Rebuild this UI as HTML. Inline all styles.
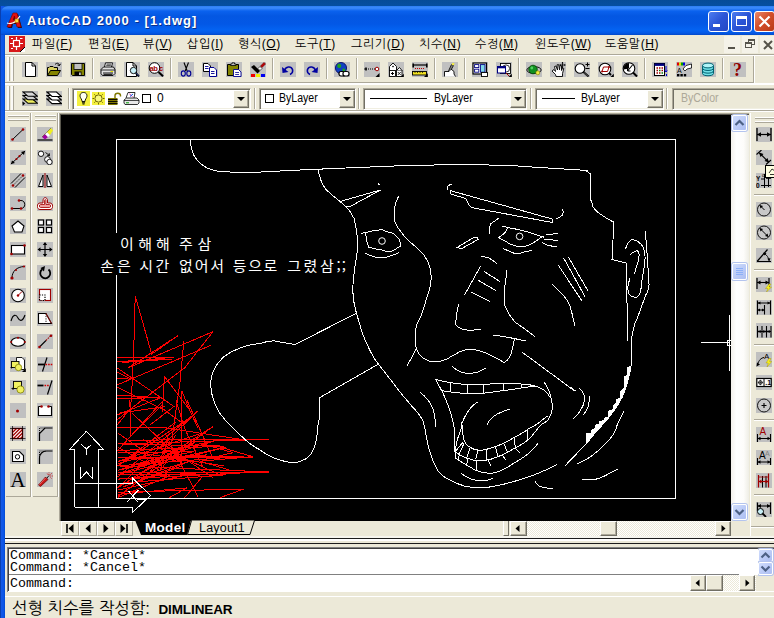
<!DOCTYPE html>
<html lang="ko"><head><meta charset="utf-8"><title>AutoCAD 2000 - [1.dwg]</title>
<style>
html,body{margin:0;padding:0}
body{width:774px;height:618px;overflow:hidden;position:relative;background:#ece9d8;font-family:"Liberation Sans","NanumGothic","Noto Sans CJK KR",sans-serif;font-size:12px;color:#000}
.abs{position:absolute}
#desk{left:0;top:0;width:774px;height:7px;background:linear-gradient(#064c98,#0550a2)}
#lborder{left:0;top:6px;width:5px;height:612px;background:linear-gradient(90deg,#0a3fb0 0,#0a3fb0 1px,#1559e6 1px,#0855e8 4px,#0347c8 5px)}
#title{left:1px;top:6px;width:773px;height:29px;border-radius:7px 0 0 0;background:linear-gradient(#2b7df3 0,#3c8cfb 2px,#0b62ee 5px,#0457e2 10px,#0358e6 18px,#0463f2 24px,#0459e6 27px,#0348c8 29px)}
#title .txt{left:26px;top:7px;color:#fff;font-weight:bold;font-size:13px;letter-spacing:1.05px;white-space:nowrap;text-shadow:1px 1px 0 #0a2f8c}
.cap{top:5px;width:21px;height:21px;border-radius:3px;border:1px solid #fff;box-sizing:border-box;background:linear-gradient(135deg,#4d7df0,#2a54d6 50%,#2348c4)}
#menubar{left:5px;top:35px;width:769px;height:19px;background:#ece9d8}
.mi{top:2px;font-size:12px;white-space:nowrap;letter-spacing:0.6px}
.mi u{text-decoration:underline}
.tbicon{width:16px;height:15px;background:#c0c0c0;overflow:hidden}
.sep{width:0;height:20px;border-left:1px solid #aca899;border-right:1px solid #fff}
.hsep{height:0;width:20px;border-top:1px solid #aca899;border-bottom:1px solid #fff}
.combo{height:22px;box-sizing:border-box;background:#fff;border:1px solid;border-color:#aca899 #fff #fff #aca899;box-shadow:inset 1px 1px 0 #716f64,inset -1px -1px 0 #f1efe2}
.dd{width:16px;height:18px;box-sizing:border-box;background:#ece9d8;border:1px solid;border-color:#fff #716f64 #716f64 #fff;box-shadow:inset -1px -1px 0 #aca899;margin:1px 0 0 0}
.dd:after{content:"";position:absolute;left:3px;top:6px;border:4px solid transparent;border-top:4px solid #000;border-bottom:0}
.mono{font-family:"Liberation Mono",monospace;font-size:13.33px;line-height:13px;white-space:pre}
.sbtn{width:16px;height:16px;box-sizing:border-box;background:#ece9d8;border:1px solid;border-color:#fff #716f64 #716f64 #fff;box-shadow:inset -1px -1px 0 #aca899}
.vsb{width:15px;height:16px;box-sizing:border-box;border:1px solid #fff;border-radius:2px;background:linear-gradient(135deg,#cfdcfc,#b9c9f6 60%,#adbff2);box-shadow:0 0 0 1px #b4c4ee;overflow:hidden}
.vsb svg{position:absolute;left:-1px;top:-1px}
.nav{width:18px;height:15px;box-sizing:border-box;background:#ece9d8;border:1px solid;border-color:#fff #aca899 #aca899 #fff;overflow:hidden}
.nav svg{position:absolute;left:-1px;top:-1px}
.hatch{background-color:#fff;background-image:linear-gradient(45deg,#ece9d8 25%,transparent 25%,transparent 75%,#ece9d8 75%),linear-gradient(45deg,#ece9d8 25%,transparent 25%,transparent 75%,#ece9d8 75%);background-size:2px 2px;background-position:0 0,1px 1px}

</style></head>
<body>
<div id="desk" class="abs"></div>
<div id="lborder" class="abs"></div>
<div id="title" class="abs">
  <svg class="abs" style="left:5px;top:6px" width="18" height="18" viewBox="0 0 18 18">
    <path d="M8 2 L12 2 L16 16 L12 16 L11 12 L7 12 L6 16 L2 16 Z" fill="#30080a"/><path d="M7 1 L11 1 L15 15 L11 15 L10 11 L6 11 L5 15 L1 15 Z M7.2 8 L9.2 8 L8.4 4 Z" fill="#e01010" stroke="#700" stroke-width="0.6"/>
    <path d="M1 11 C4 12,8 11,10 9 L14 4" fill="none" stroke="#fff" stroke-width="1.2"/>
    <rect x="9" y="7" width="3.4" height="3.4" fill="#ffe040" stroke="#a07000" stroke-width="0.6"/>
  </svg>
  <div class="abs txt">AutoCAD 2000 - [1.dwg]</div>
  <div class="abs cap" style="left:707px"><div class="abs" style="left:4px;top:12px;width:7px;height:3px;background:#fff"></div></div>
  <div class="abs cap" style="left:730px"><div class="abs" style="left:4px;top:4px;width:11px;height:10px;box-sizing:border-box;border:1px solid #fff;border-top:3px solid #fff"></div></div>
  <div class="abs cap" style="left:753px;background:linear-gradient(135deg,#e8886a,#d4502c 45%,#b83a18)">
    <svg class="abs" style="left:3px;top:3px" width="13" height="13" viewBox="0 0 13 13"><path d="M1.5 1.5 L11.5 11.5 M11.5 1.5 L1.5 11.5" stroke="#fff" stroke-width="2.2"/></svg>
  </div>
</div>
<div id="menubar" class="abs">
  <svg class="abs" style="left:4px;top:1px" width="16" height="16" viewBox="0 0 16 16">
    <rect x="0" y="0" width="16" height="16" fill="#d81818"/>
    <path d="M11 16 L16 11 L16 16 Z" fill="#fff"/><path d="M11 16 L16 11" stroke="#000" stroke-width="1"/>
    <rect x="4.5" y="4.5" width="6" height="6" fill="none" stroke="#fff" stroke-width="1.2"/>
    <path d="M7.5 1 V4 M7.5 11 V14 M1 7.5 H4 M11 7.5 H14 M2 2.5 H4 M11 2.5 H13.5 M2 12.5 H4" stroke="#fff" stroke-width="1.2"/>
  </svg>
  <div class="abs mi" style="left:27px">파일(<u>F</u>)</div>
  <div class="abs mi" style="left:83px">편집(<u>E</u>)</div>
  <div class="abs mi" style="left:138px">뷰(<u>V</u>)</div>
  <div class="abs mi" style="left:182px">삽입(<u>I</u>)</div>
  <div class="abs mi" style="left:233px">형식(<u>O</u>)</div>
  <div class="abs mi" style="left:290px">도구(<u>T</u>)</div>
  <div class="abs mi" style="left:346px">그리기(<u>D</u>)</div>
  <div class="abs mi" style="left:414px">치수(<u>N</u>)</div>
  <div class="abs mi" style="left:470px">수정(<u>M</u>)</div>
  <div class="abs mi" style="left:530px">윈도우(<u>W</u>)</div>
  <div class="abs mi" style="left:600px">도움말(<u>H</u>)</div>
  <!-- MDI child buttons -->
  <div class="abs" style="left:719px;top:1px;width:16px;height:17px;background:#f4f2e8"><div class="abs" style="left:4px;top:11px;width:7px;height:2px;background:#55534a"></div></div>
  <div class="abs" style="left:737px;top:1px;width:16px;height:17px;background:#f4f2e8">
    <div class="abs" style="left:6px;top:3px;width:7px;height:6px;box-sizing:border-box;border:1px solid #55534a;border-top-width:2px"></div>
    <div class="abs" style="left:3px;top:6px;width:7px;height:6px;box-sizing:border-box;border:1px solid #55534a;border-top-width:2px;background:#f4f2e8"></div>
  </div>
  <div class="abs" style="left:755px;top:1px;width:16px;height:17px;background:#f4f2e8">
    <svg class="abs" style="left:3px;top:4px" width="10" height="10" viewBox="0 0 10 10"><path d="M1 1 L9 9 M9 1 L1 9" stroke="#55534a" stroke-width="2"/></svg>
  </div>
</div>
<!-- separator lines under menubar -->
<div class="abs" style="left:5px;top:54px;width:769px;height:1px;background:#aca899"></div>
<div class="abs" style="left:5px;top:55px;width:769px;height:1px;background:#fff"></div>
<!-- standard toolbar -->
<div class="abs" style="left:7px;top:57px;width:3px;height:24px;background:#fbfaf6;border-right:1px solid #aca899;box-sizing:border-box"></div>
<div class="abs" style="left:11px;top:57px;width:3px;height:24px;background:#fbfaf6;border-right:1px solid #aca899;box-sizing:border-box"></div>
<svg class="abs" style="left:22px;top:62px" width="16" height="15" viewBox="0 0 16 15"><rect width="16" height="15" fill="#c0c0c0"/><path d="M3.5 0.5 H10 L13.5 4 V14.5 H3.5 Z" fill="#fff" stroke="#000"/><path d="M10 0.5 V4 H13.5" fill="none" stroke="#000"/></svg>
<svg class="abs" style="left:46px;top:62px" width="16" height="15" viewBox="0 0 16 15"><rect width="16" height="15" fill="#c0c0c0"/><path d="M1.5 13.5 V5.5 H3 L4 4.5 H7 L8 5.5 H11.5 V8" fill="#d8d060" stroke="#000"/><path d="M1.5 13.5 L4.5 8.5 H14.5 L11.5 13.5 Z" fill="#848400" stroke="#000"/><path d="M9 2.5 C11 0.5,13 1,13.5 3.5 M13.5 3.5 L11.5 3 M13.5 3.5 L14.5 1.8" fill="none" stroke="#000"/></svg>
<svg class="abs" style="left:70px;top:62px" width="16" height="15" viewBox="0 0 16 15"><rect width="16" height="15" fill="#c0c0c0"/><path d="M1.5 1.5 H14.5 V13.5 H2.5 L1.5 12.5 Z" fill="#848400" stroke="#000"/><rect x="4" y="1.5" width="8" height="6" fill="#c0c0c0" stroke="#000" stroke-width="0.8"/><rect x="4.5" y="9.5" width="7" height="4" fill="#000"/><rect x="9" y="10.5" width="1.8" height="2.5" fill="#c0c0c0"/></svg>
<div class="abs" style="left:92px;top:58px;width:1px;height:21px;background:#aca899"></div><div class="abs" style="left:93px;top:58px;width:1px;height:21px;background:#fff"></div>
<svg class="abs" style="left:100px;top:62px" width="16" height="15" viewBox="0 0 16 15"><rect width="16" height="15" fill="#c0c0c0"/><path d="M4.5 5 L5.5 0.8 H12.5 L11.5 5" fill="#fff" stroke="#000" stroke-width="0.9"/><path d="M6.5 2.2 H11 M6.2 3.6 H10.8" stroke="#000" stroke-width="0.7"/><path d="M1 7.5 L3.5 5 H13.5 L15 7.5 V11.5 L13 13.5 H2.5 L1 11.5 Z" fill="#e0e0e0" stroke="#000" stroke-width="0.9"/><path d="M1 8 H15" stroke="#000" stroke-width="0.8"/><path d="M3 11 H13 M3.5 12.4 H12.5" stroke="#000" stroke-width="0.9"/><rect x="10.5" y="9" width="2.5" height="1" fill="#e0e000"/></svg>
<svg class="abs" style="left:124px;top:62px" width="16" height="15" viewBox="0 0 16 15"><rect width="16" height="15" fill="#c0c0c0"/><path d="M2.5 0.5 H9 L12.5 4 V14.5 H2.5 Z" fill="#fff" stroke="#000"/><path d="M9 0.5 V4 H12.5" fill="none" stroke="#000"/><circle cx="9.5" cy="8.5" r="3.2" fill="#c8f0f8" stroke="#000" stroke-width="0.9"/><path d="M11.8 11 L15 14.3" stroke="#000" stroke-width="1.8"/><path d="M12.2 11.2 L14.6 13.8" stroke="#3050c0" stroke-width="0.7"/></svg>
<svg class="abs" style="left:148px;top:62px" width="16" height="15" viewBox="0 0 16 15"><rect width="16" height="15" fill="#c0c0c0"/><circle cx="6.5" cy="6" r="5.3" fill="#fff" stroke="#000" stroke-width="1"/><path d="M10.5 10 L15 14.3" stroke="#000" stroke-width="2"/><text x="1.6" y="8.8" font-family="Liberation Sans,sans-serif" font-size="7.5" font-weight="bold" fill="#a00000" letter-spacing="-0.5">ab</text><text x="11" y="8.8" font-family="Liberation Sans,sans-serif" font-size="7.5" font-weight="bold" fill="#a00000">c</text></svg>
<div class="abs" style="left:170px;top:58px;width:1px;height:21px;background:#aca899"></div><div class="abs" style="left:171px;top:58px;width:1px;height:21px;background:#fff"></div>
<svg class="abs" style="left:178px;top:62px" width="16" height="15" viewBox="0 0 16 15"><rect width="16" height="15" fill="#c0c0c0"/><path d="M6 0.5 L9.2 9 M10.5 0.5 L7.2 9" stroke="#000" stroke-width="1.1" fill="none"/><ellipse cx="5.3" cy="11.5" rx="2" ry="2.6" fill="none" stroke="#000090" stroke-width="1.1"/><ellipse cx="10.8" cy="11.5" rx="2" ry="2.6" fill="none" stroke="#000090" stroke-width="1.1"/></svg>
<svg class="abs" style="left:202px;top:62px" width="16" height="15" viewBox="0 0 16 15"><rect width="16" height="15" fill="#c0c0c0"/><path d="M1.5 1.5 H6 L8.5 4 V9.5 H1.5 Z" fill="#fff" stroke="#000"/><path d="M3 4.5 H6.5 M3 6.5 H6.5" stroke="#000090" stroke-width="0.9"/><path d="M7.5 5.5 H12 L14.5 8 V14.5 H7.5 Z" fill="#fff" stroke="#000090"/><path d="M9 9.5 H12.5 M9 11.5 H12.5" stroke="#000090" stroke-width="0.9"/></svg>
<svg class="abs" style="left:226px;top:62px" width="16" height="15" viewBox="0 0 16 15"><rect width="16" height="15" fill="#c0c0c0"/><path d="M1.5 2.5 H12.5 V13.5 H1.5 Z" fill="#848400" stroke="#000"/><path d="M4.5 3.5 V2 H6 V0.8 H8.5 V2 H10 V3.5 Z" fill="#c0c0c0" stroke="#000" stroke-width="0.8"/><path d="M7.5 7.5 H12.5 L15 10 V14.5 H7.5 Z" fill="#fff" stroke="#000090" stroke-width="0.9"/><path d="M9.2 10.5 H13 M9.2 12.5 H13" stroke="#000090" stroke-width="0.8"/></svg>
<svg class="abs" style="left:250px;top:62px" width="16" height="15" viewBox="0 0 16 15"><rect width="16" height="15" fill="#c0c0c0"/><path d="M1 5 L4 3 L10 9 L7.5 11.5 Z" fill="#000"/><path d="M8 6.5 L10 4.5 L12 6.5 L10 8.5 Z" fill="#fff" stroke="#000" stroke-width="0.6"/><path d="M10.5 4 L14 0.5 L15.5 2 L12 5.5 Z" fill="#c00000" stroke="#600000" stroke-width="0.6"/><rect x="1" y="12" width="4" height="3" fill="#f00000"/><rect x="6" y="12" width="4" height="3" fill="#f0f000"/><rect x="11" y="12" width="4" height="3" fill="#0000f0"/></svg>
<div class="abs" style="left:272px;top:58px;width:1px;height:21px;background:#aca899"></div><div class="abs" style="left:273px;top:58px;width:1px;height:21px;background:#fff"></div>
<svg class="abs" style="left:280px;top:62px" width="16" height="15" viewBox="0 0 16 15"><rect width="16" height="15" fill="#c0c0c0"/><path d="M4.5 8.5 C5.5 4.5,11 3.5,12.5 7.5 C13 9.5,12 11.5,10 12.5" fill="none" stroke="#0000a0" stroke-width="1.6"/><path d="M2 5 L2.5 11 L8.5 10 Z" fill="#0000a0"/></svg>
<svg class="abs" style="left:304px;top:62px" width="16" height="15" viewBox="0 0 16 15"><rect width="16" height="15" fill="#c0c0c0"/><path d="M11.5 8.5 C10.5 4.5,5 3.5,3.5 7.5 C3 9.5,4 11.5,6 12.5" fill="none" stroke="#0000a0" stroke-width="1.6"/><path d="M14 5 L13.5 11 L7.5 10 Z" fill="#0000a0"/></svg>
<div class="abs" style="left:326px;top:58px;width:1px;height:21px;background:#aca899"></div><div class="abs" style="left:327px;top:58px;width:1px;height:21px;background:#fff"></div>
<svg class="abs" style="left:334px;top:62px" width="16" height="15" viewBox="0 0 16 15"><rect width="16" height="15" fill="#c0c0c0"/><circle cx="7" cy="6" r="5.6" fill="#1040c0" stroke="#000060" stroke-width="0.8"/><path d="M4 2 C6 1,8 3,7 5 C6 7,3.5 6,3 4 Z M8.5 7 C10 6,12 7,11 9.5 C10 11,8 10,8.5 7 Z" fill="#20a020"/><rect x="5" y="9.5" width="6" height="4.5" rx="2" fill="#fff" stroke="#000" stroke-width="1.2"/><rect x="9" y="9.5" width="6" height="4.5" rx="2" fill="#fff" stroke="#000" stroke-width="1.2"/></svg>
<div class="abs" style="left:356px;top:58px;width:1px;height:21px;background:#aca899"></div><div class="abs" style="left:357px;top:58px;width:1px;height:21px;background:#fff"></div>
<svg class="abs" style="left:364px;top:62px" width="16" height="15" viewBox="0 0 16 15"><rect width="16" height="15" fill="#c0c0c0"/><path d="M1 7 H3" stroke="#000" stroke-width="1.6"/><path d="M0 6 V8 M2 5 V9" stroke="#000" stroke-width="0.8"/><path d="M4 7 H11" stroke="#000" stroke-width="1" stroke-dasharray="1 1"/><circle cx="13" cy="7" r="1.8" fill="#fff" stroke="#a00000" stroke-width="1"/><path d="M11.5 15 L15.5 11 V15 Z" fill="#000"/></svg>
<svg class="abs" style="left:388px;top:62px" width="16" height="15" viewBox="0 0 16 15"><rect width="16" height="15" fill="#c0c0c0"/><path d="M1.5 8.5 V4.5 L5 1 L8.5 4.5 V8.5" fill="#fff" stroke="#000" stroke-width="0.9"/><path d="M4 4.5 L5 3.5 L6 4.5 L5 5.5 Z" fill="#000"/><rect x="1.5" y="8.5" width="6" height="6" fill="#fff" stroke="#000" stroke-width="0.9"/><path d="M3 11.5 H6 M4.5 10 V13" stroke="#000" stroke-width="1"/><rect x="8.5" y="8.5" width="5.5" height="6" fill="#fff" stroke="#000" stroke-width="0.9"/><path d="M9.8 10 L12.8 13 M12.8 10 L9.8 13" stroke="#000" stroke-width="0.8"/><path d="M8.5 8.5 L11.5 5.5 L14 8.5" fill="#fff" stroke="#000" stroke-width="0.9"/><path d="M12.5 15 L15.8 11.7 V15 Z" fill="#000"/></svg>
<svg class="abs" style="left:412px;top:62px" width="16" height="15" viewBox="0 0 16 15"><rect width="16" height="15" fill="#c0c0c0"/><path d="M1 3 H15" stroke="#000" stroke-width="1.2"/><path d="M1.2 1.5 V5.5 M14.8 1.5 V5.5" stroke="#000" stroke-width="1.6"/><path d="M3 6.5 H13" stroke="#c00000" stroke-width="1" stroke-dasharray="1 1"/><rect x="0.5" y="9.5" width="14" height="3.5" fill="#f0e020" stroke="#000" stroke-width="0.9"/><path d="M3 9.5 V11 M5.5 9.5 V11 M8 9.5 V11 M10.5 9.5 V11" stroke="#000" stroke-width="0.7"/><path d="M12 15 L15.8 11.2 V15 Z" fill="#000"/></svg>
<div class="abs" style="left:434px;top:58px;width:1px;height:21px;background:#aca899"></div><div class="abs" style="left:435px;top:58px;width:1px;height:21px;background:#fff"></div>
<svg class="abs" style="left:442px;top:62px" width="16" height="15" viewBox="0 0 16 15"><rect width="16" height="15" fill="#c0c0c0"/><path d="M2.5 14.5 V9.5 H7 L9 7 L12 9.5 V12 L13.5 14.5" fill="#fff" stroke="#000" stroke-width="0.9"/><path d="M6.5 9 L9.5 2.5 L11.5 3.5 L9 8" fill="#808080" stroke="#000" stroke-width="0.8"/><path d="M9.5 2.5 L10.5 0.8 L12.6 1.5 L11.5 3.5 Z" fill="#f8f040"/></svg>
<div class="abs" style="left:464px;top:58px;width:1px;height:21px;background:#aca899"></div><div class="abs" style="left:465px;top:58px;width:1px;height:21px;background:#fff"></div>
<svg class="abs" style="left:472px;top:62px" width="16" height="15" viewBox="0 0 16 15"><rect width="16" height="15" fill="#c0c0c0"/><rect x="1" y="1" width="13.5" height="11" fill="#fff" stroke="#000" stroke-width="1.2"/><rect x="2.6" y="2.6" width="4.2" height="3" fill="#fff" stroke="#000080" stroke-width="0.9"/><rect x="2.6" y="7.2" width="4.2" height="3" fill="#fff" stroke="#000080" stroke-width="0.9"/><rect x="8.4" y="2.6" width="4.6" height="7.6" fill="#80d8e8" stroke="#000080" stroke-width="0.9"/><rect x="9.5" y="10.5" width="6" height="4" fill="#fff" stroke="#000" stroke-width="0.9"/></svg>
<svg class="abs" style="left:496px;top:62px" width="16" height="15" viewBox="0 0 16 15"><rect width="16" height="15" fill="#c0c0c0"/><rect x="4.5" y="1.5" width="10" height="10" fill="#fff" stroke="#000" stroke-width="0.9"/><circle cx="10" cy="6.5" r="3.6" fill="none" stroke="#000" stroke-width="0.8"/><rect x="1.5" y="4.5" width="8" height="6.5" fill="#fff" stroke="#000080" stroke-width="1"/><rect x="1.5" y="4.5" width="8" height="1.8" fill="#000080"/><path d="M10 11 L13 14" stroke="#a00000" stroke-width="1"/><path d="M12.5 15 L15.8 11.7 V15 Z" fill="#000"/></svg>
<div class="abs" style="left:518px;top:58px;width:1px;height:21px;background:#aca899"></div><div class="abs" style="left:519px;top:58px;width:1px;height:21px;background:#fff"></div>
<svg class="abs" style="left:526px;top:62px" width="16" height="15" viewBox="0 0 16 15"><rect width="16" height="15" fill="#c0c0c0"/><ellipse cx="8" cy="8" rx="7.2" ry="3.4" fill="none" stroke="#000" stroke-width="0.9"/><circle cx="7" cy="7.5" r="4.3" fill="#109020" stroke="#004000" stroke-width="0.8"/><circle cx="5.8" cy="6" r="1.4" fill="#50d060"/><circle cx="11.8" cy="10.8" r="2" fill="#f0f040" stroke="#808000" stroke-width="0.6"/></svg>
<svg class="abs" style="left:550px;top:62px" width="16" height="15" viewBox="0 0 16 15"><rect width="16" height="15" fill="#c0c0c0"/><path d="M2 9 L4 7.5 L5.5 9.5 L4.5 4.5 L6 4 L7.5 8 L7 2.8 L8.6 2.6 L9.5 7.8 L10 3.5 L11.5 3.8 L11.5 8.5 L12.5 6 L13.8 6.5 L12.5 11.5 L12.5 14.5 H6 L5.5 12.5 Z" fill="#fff" stroke="#000" stroke-width="0.9"/><path d="M12.5 0 V6 M9.5 3 H15.5" stroke="#000" stroke-width="0.8"/><path d="M12.5 0 L11.5 1.2 H13.5 Z M12.5 6 L11.5 4.8 H13.5 Z M9.5 3 L10.7 2 V4 Z M15.5 3 L14.3 2 V4 Z" fill="#000"/></svg>
<svg class="abs" style="left:574px;top:62px" width="16" height="15" viewBox="0 0 16 15"><rect width="16" height="15" fill="#c0c0c0"/><circle cx="6" cy="6.5" r="4.8" fill="#fff" stroke="#000" stroke-width="1.1"/><path d="M9.5 10 L14.5 14.5" stroke="#000" stroke-width="2"/><path d="M10 10.6 L14 14.2" stroke="#a0a0a0" stroke-width="0.6"/><path d="M11.5 2.5 H15.5 M13.5 0.5 V4.5 M11.5 6.5 H15.5" stroke="#000" stroke-width="1"/></svg>
<svg class="abs" style="left:598px;top:62px" width="16" height="15" viewBox="0 0 16 15"><rect width="16" height="15" fill="#c0c0c0"/><circle cx="7" cy="7" r="5.8" fill="#fff" stroke="#000" stroke-width="1.1"/><path d="M4 9.5 L5.5 5 H11 L9.5 9.5 Z" fill="none" stroke="#a00000" stroke-width="1"/><circle cx="4" cy="9.5" r="0.9" fill="#a00000"/><circle cx="11" cy="5" r="0.9" fill="#a00000"/><path d="M11 11 L13 13" stroke="#000" stroke-width="1.8"/><path d="M12.5 15 L15.8 11.7 V15 Z" fill="#000"/></svg>
<svg class="abs" style="left:622px;top:62px" width="16" height="15" viewBox="0 0 16 15"><rect width="16" height="15" fill="#c0c0c0"/><circle cx="7" cy="6.5" r="5.8" fill="#fff" stroke="#000" stroke-width="1.1"/><path d="M11 10.5 L15 14.5" stroke="#000" stroke-width="2"/><path d="M7 6.5 L7 1 A5.5 5.5 0 0 0 1.6 7.5 Z" fill="#000"/><path d="M10.5 3 L5.5 9 M5.5 9 V6 M5.5 9 H8.5" stroke="#000" stroke-width="1.1" fill="none"/></svg>
<div class="abs" style="left:644px;top:58px;width:1px;height:21px;background:#aca899"></div><div class="abs" style="left:645px;top:58px;width:1px;height:21px;background:#fff"></div>
<svg class="abs" style="left:652px;top:62px" width="16" height="15" viewBox="0 0 16 15"><rect width="16" height="15" fill="#c0c0c0"/><rect x="2.5" y="1.5" width="10" height="12" fill="#fff" stroke="#000" stroke-width="1"/><rect x="2.5" y="1.5" width="10" height="2.4" fill="#000080"/><path d="M4.5 6 H6 M7 6 H8.5 M9.5 6 H11 M4.5 8.5 H6 M9.5 8.5 H11 M4.5 11 H6 M7 11 H8.5" stroke="#a00000" stroke-width="1.4"/><path d="M7 8.5 H8.5 M9.5 11 H11" stroke="#008000" stroke-width="1.4"/><path d="M14 4 V10 M14 10 L12.8 8.5 M14 10 L15.2 8.5 M14.5 12 V14" stroke="#0000d0" stroke-width="1"/></svg>
<svg class="abs" style="left:676px;top:62px" width="16" height="15" viewBox="0 0 16 15"><rect width="16" height="15" fill="#c0c0c0"/><rect x="1" y="0.5" width="2" height="3" fill="#e00000"/><rect x="3" y="0.5" width="2" height="3" fill="#e0e000"/><rect x="5" y="0.5" width="2" height="3" fill="#00a000"/><rect x="7" y="0.5" width="2" height="3" fill="#0000e0"/><path d="M7 7 L10 3.5 L15.5 2 V6 L11 7 L9 9 Z" fill="#fff" stroke="#000" stroke-width="0.8"/><text x="1" y="10.5" font-family="Liberation Sans,sans-serif" font-size="7" fill="#000">A</text><rect x="1" y="12" width="2.4" height="2.4" fill="#000"/><rect x="4.4" y="12" width="2.4" height="2.4" fill="#000"/><rect x="7.8" y="12" width="2.4" height="2.4" fill="#000"/></svg>
<svg class="abs" style="left:700px;top:62px" width="16" height="15" viewBox="0 0 16 15"><rect width="16" height="15" fill="#c0c0c0"/><path d="M2.5 3.5 V11.5 C2.5 14.5,13.5 14.5,13.5 11.5 V3.5" fill="#70e0e8" stroke="#006070" stroke-width="1"/><ellipse cx="8" cy="3.5" rx="5.5" ry="2.4" fill="#b0f4f8" stroke="#006070" stroke-width="1"/><path d="M2.5 6.2 C2.5 9.2,13.5 9.2,13.5 6.2 M2.5 8.9 C2.5 11.9,13.5 11.9,13.5 8.9" fill="none" stroke="#006070" stroke-width="1"/></svg>
<div class="abs" style="left:722px;top:58px;width:1px;height:21px;background:#aca899"></div><div class="abs" style="left:723px;top:58px;width:1px;height:21px;background:#fff"></div>
<svg class="abs" style="left:730px;top:62px" width="16" height="15" viewBox="0 0 16 15"><rect width="16" height="15" fill="#c0c0c0"/><text x="3" y="14" font-family="Liberation Serif,serif" font-size="18" font-weight="bold" fill="#900000">?</text></svg>
<div class="abs" style="left:753px;top:56px;width:1px;height:27px;background:#aca899"></div><div class="abs" style="left:754px;top:56px;width:1px;height:27px;background:#fff"></div>
<div class="abs" style="left:5px;top:82px;width:749px;height:1px;background:#aca899"></div><div class="abs" style="left:5px;top:83px;width:769px;height:2px;background:#fff"></div>
<!-- object properties toolbar -->
<div class="abs" style="left:7px;top:86px;width:3px;height:24px;background:#fbfaf6;border-right:1px solid #aca899;box-sizing:border-box"></div>
<div class="abs" style="left:11px;top:86px;width:3px;height:24px;background:#fbfaf6;border-right:1px solid #aca899;box-sizing:border-box"></div>
<svg class="abs" style="left:22px;top:91px" width="16" height="15" viewBox="0 0 16 15"><rect width="16" height="15" fill="#c0c0c0"/><path d="M1 8 L10.5 8 L15.5 12.3 L6 12.3 Z" fill="#f0f060" stroke="#000" stroke-width="1.1"/><path d="M1 4.5 L10.5 4.5 L15.5 8.8 L6 8.8 Z" fill="#d0d0d0" stroke="#000" stroke-width="1.1"/><path d="M1 1 L10.5 1 L15.5 5.3 L6 5.3 Z" fill="#d8d8d8" stroke="#000" stroke-width="1.1"/><path d="M0.3 10.5 L0.8 14.8 L3.2 12.2 Z" fill="#000"/></svg>
<svg class="abs" style="left:46px;top:91px" width="16" height="15" viewBox="0 0 16 15"><rect width="16" height="15" fill="#c0c0c0"/><path d="M1 8 L10.5 8 L15.5 12.6 L6 12.6 Z" fill="#fff" stroke="#000" stroke-width="1.2"/><path d="M1 4.5 L10.5 4.5 L15.5 9 L6 9 Z" fill="#fff" stroke="#000" stroke-width="1.2"/><path d="M1 1 L10.5 1 L15.5 5.5 L6 5.5 Z" fill="#fff" stroke="#000" stroke-width="1.2"/></svg>
<div class="abs" style="left:68px;top:88px;width:1px;height:21px;background:#aca899"></div><div class="abs" style="left:69px;top:88px;width:1px;height:21px;background:#fff"></div>
<div class="abs combo" style="left:72px;top:88px;width:179px">
<svg class="abs" style="left:4px;top:2px" width="80" height="15" viewBox="0 0 80 15">
<rect x="0" y="0" width="13" height="15" fill="#f4f040"/><path d="M6.5 1.5 C3 1.5,2.2 5,4 7.5 C4.8 8.8,5 9.5,5 10.5 H8 C8 9.5,8.2 8.8,9 7.5 C10.8 5,10 1.5,6.5 1.5 Z" fill="#fffff0" stroke="#000" stroke-width="0.9"/><path d="M5 11.8 H8 M5.5 13 H7.5" stroke="#000" stroke-width="1"/>
<rect x="15" y="1" width="13" height="13" fill="#f4f040"/><circle cx="21.5" cy="7.5" r="3.6" fill="#f8f880" stroke="#605800" stroke-width="0.9"/><path d="M21.5 1.5 V3 M21.5 12 V13.5 M15.5 7.5 H17 M26 7.5 H27.5 M17.3 3.3 L18.4 4.4 M24.6 10.6 L25.7 11.7 M25.7 3.3 L24.6 4.4 M18.4 10.6 L17.3 11.7" stroke="#605800" stroke-width="0.9"/>
<path d="M38 7 V4.5 C38 1.5,43.5 1.5,43.5 4.5 V5.5" fill="none" stroke="#807800" stroke-width="1.4"/><rect x="31" y="7" width="9.5" height="7" fill="#807800"/><path d="M31 8.5 H40.5 M31 10.5 H40.5 M31 12.5 H40.5" stroke="#000" stroke-width="0.9"/>
<path d="M49 7 L51 1.5 H58 L57 7" fill="#fff" stroke="#000" stroke-width="0.8"/><path d="M52.5 3 L55.5 5.5" stroke="#e000a0" stroke-width="1"/><path d="M53 5.5 L56 3" stroke="#0060e0" stroke-width="1"/><path d="M47 9 L49.5 7 H60 L62 9 V12 L60.5 13.5 H48 L47 12 Z" fill="#e8e8e8" stroke="#000" stroke-width="0.8"/><path d="M47 9.5 H62" stroke="#000" stroke-width="0.7"/><path d="M49 11.8 H52" stroke="#00a000" stroke-width="1"/>
<rect x="65.5" y="3.5" width="8" height="8" fill="#fff" stroke="#000" stroke-width="1"/>
</svg>
<div class="abs" style="left:84px;top:3px;font-size:12px;line-height:13px">0</div>
<div class="abs dd" style="left:160px;top:0px"></div></div>
<div class="abs" style="left:254px;top:88px;width:1px;height:21px;background:#aca899"></div><div class="abs" style="left:255px;top:88px;width:1px;height:21px;background:#fff"></div>
<div class="abs combo" style="left:259px;top:88px;width:97px">
<div class="abs" style="left:5px;top:5px;width:9px;height:9px;box-sizing:border-box;border:1px solid #000;background:#fff"></div>
<div class="abs" style="left:19px;top:3px;font-size:12px;line-height:13px;transform:scaleX(.88);transform-origin:0 0">ByLayer</div>
<div class="abs dd" style="left:79px;top:0px"></div></div>
<div class="abs" style="left:358px;top:88px;width:1px;height:21px;background:#aca899"></div><div class="abs" style="left:359px;top:88px;width:1px;height:21px;background:#fff"></div>
<div class="abs combo" style="left:363px;top:88px;width:164px">
<div class="abs" style="left:6px;top:9px;width:57px;height:1px;background:#000"></div>
<div class="abs" style="left:70px;top:3px;font-size:12px;line-height:13px;transform:scaleX(.88);transform-origin:0 0">ByLayer</div>
<div class="abs dd" style="left:146px;top:0px"></div></div>
<div class="abs" style="left:530px;top:88px;width:1px;height:21px;background:#aca899"></div><div class="abs" style="left:531px;top:88px;width:1px;height:21px;background:#fff"></div>
<div class="abs combo" style="left:535px;top:88px;width:129px">
<div class="abs" style="left:6px;top:9px;width:33px;height:1px;background:#000"></div>
<div class="abs" style="left:45px;top:3px;font-size:12px;line-height:13px;transform:scaleX(.88);transform-origin:0 0">ByLayer</div>
<div class="abs dd" style="left:111px;top:0px"></div></div>
<div class="abs" style="left:666px;top:88px;width:1px;height:21px;background:#aca899"></div><div class="abs" style="left:667px;top:88px;width:1px;height:21px;background:#fff"></div>
<div class="abs combo" style="left:672px;top:88px;width:110px;background:#ece9d8">
<div class="abs" style="left:8px;top:3px;font-size:12px;line-height:13px;color:#aca899;transform:scaleX(.88);transform-origin:0 0">ByColor</div></div>
<div class="abs" style="left:5px;top:110px;width:769px;height:1px;background:#aca899"></div><div class="abs" style="left:5px;top:111px;width:769px;height:1px;background:#fff"></div>
<!-- draw / modify toolbars -->
<div class="abs" style="left:8px;top:115px;width:21px;height:2px;background:#fff;border-bottom:1px solid #aca899;box-sizing:border-box"></div>
<div class="abs" style="left:8px;top:119px;width:21px;height:2px;background:#fff;border-bottom:1px solid #aca899;box-sizing:border-box"></div>
<div class="abs" style="left:35px;top:115px;width:21px;height:2px;background:#fff;border-bottom:1px solid #aca899;box-sizing:border-box"></div>
<div class="abs" style="left:35px;top:119px;width:21px;height:2px;background:#fff;border-bottom:1px solid #aca899;box-sizing:border-box"></div>
<svg class="abs" style="left:10px;top:127px" width="16" height="15" viewBox="0 0 16 15"><rect width="16" height="15" fill="#c0c0c0"/><path d="M2.5 12.5 L13 2.5" stroke="#000" stroke-width="1"/><circle cx="2.5" cy="12.5" r="1.3" fill="#a00000"/><circle cx="13" cy="2.5" r="1.3" fill="#a00000"/></svg>
<svg class="abs" style="left:10px;top:150px" width="16" height="15" viewBox="0 0 16 15"><rect width="16" height="15" fill="#c0c0c0"/><path d="M1 14 L15 1" stroke="#000" stroke-width="1"/><path d="M15 1 L11 2 L14 5 Z M1 14 L5 13 L2 10.5 Z" fill="#000"/><circle cx="6.5" cy="9" r="1.1" fill="#a00000"/><circle cx="9.5" cy="6.2" r="1.1" fill="#a00000"/></svg>
<svg class="abs" style="left:10px;top:173px" width="16" height="15" viewBox="0 0 16 15"><rect width="16" height="15" fill="#c0c0c0"/><path d="M1 10.5 L11 0.5 M5 14.5 L15 4.5" stroke="#000" stroke-width="1"/><path d="M3 12.5 L13 2.5" stroke="#000" stroke-width="1" stroke-dasharray="1.2 1.6"/><circle cx="3" cy="12.5" r="1.3" fill="#a00000"/><circle cx="13" cy="2.5" r="1.3" fill="#a00000"/></svg>
<svg class="abs" style="left:10px;top:196px" width="16" height="15" viewBox="0 0 16 15"><rect width="16" height="15" fill="#c0c0c0"/><path d="M2 12.5 H11 C16 12.5,16 4.5,11 4.5 H9" fill="none" stroke="#000" stroke-width="1"/><circle cx="2" cy="12.5" r="1.3" fill="#a00000"/><circle cx="11" cy="12.5" r="1.3" fill="#a00000"/><circle cx="9" cy="4.5" r="1.3" fill="#a00000"/></svg>
<svg class="abs" style="left:10px;top:219px" width="16" height="15" viewBox="0 0 16 15"><rect width="16" height="15" fill="#c0c0c0"/><path d="M8 2 L14 7 L12 13 H4.5 L2 7 Z" fill="#fff" stroke="#000" stroke-width="1.1"/></svg>
<svg class="abs" style="left:10px;top:242px" width="16" height="15" viewBox="0 0 16 15"><rect width="16" height="15" fill="#c0c0c0"/><rect x="1.5" y="3.5" width="13" height="8.5" fill="#fff" stroke="#000" stroke-width="1.1"/><circle cx="1.5" cy="12" r="1.3" fill="#a00000"/><circle cx="14.5" cy="3.5" r="1.3" fill="#a00000"/></svg>
<svg class="abs" style="left:10px;top:265px" width="16" height="15" viewBox="0 0 16 15"><rect width="16" height="15" fill="#c0c0c0"/><path d="M2 13 C2 6,7 2,14 1.5" fill="none" stroke="#000" stroke-width="1"/><circle cx="2" cy="13" r="1.6" fill="#a00000"/><circle cx="6" cy="5" r="1.1" fill="#a00000"/><circle cx="14" cy="1.5" r="1.1" fill="#a00000"/></svg>
<svg class="abs" style="left:10px;top:288px" width="16" height="15" viewBox="0 0 16 15"><rect width="16" height="15" fill="#c0c0c0"/><circle cx="8" cy="7.5" r="6.3" fill="#fff" stroke="#000" stroke-width="1.1"/><path d="M8 7.5 L12 3.5" stroke="#a00000" stroke-width="1"/><circle cx="8" cy="7.5" r="1.2" fill="#a00000"/></svg>
<svg class="abs" style="left:10px;top:311px" width="16" height="15" viewBox="0 0 16 15"><rect width="16" height="15" fill="#c0c0c0"/><path d="M1 10 C3 3,6 3,8 7 C10 11,13 10,15 4" fill="none" stroke="#000" stroke-width="1.1"/></svg>
<svg class="abs" style="left:10px;top:334px" width="16" height="15" viewBox="0 0 16 15"><rect width="16" height="15" fill="#c0c0c0"/><ellipse cx="8" cy="8" rx="6.8" ry="4.2" fill="#fff" stroke="#000" stroke-width="1.1"/><circle cx="8" cy="3.8" r="1.1" fill="#a00000"/><circle cx="1.2" cy="8" r="1.1" fill="#a00000"/><circle cx="14.8" cy="8" r="1.1" fill="#a00000"/></svg>
<svg class="abs" style="left:10px;top:357px" width="16" height="15" viewBox="0 0 16 15"><rect width="16" height="15" fill="#c0c0c0"/><path d="M6.5 0.5 H12 L14.5 3 V12.5 H6.5 Z" fill="#fff" stroke="#000" stroke-width="0.9"/><rect x="1.5" y="4.5" width="7.5" height="6" fill="#f0f060" stroke="#000" stroke-width="0.9"/><circle cx="8.5" cy="10.5" r="3.2" fill="#f0f060" stroke="#808000" stroke-width="0.8"/><path d="M0.5 10.5 H3 M1.5 9.5 V11.5" stroke="#000" stroke-width="0.8"/><path d="M12 15 L15.8 11.2 V15 Z" fill="#000"/></svg>
<svg class="abs" style="left:10px;top:380px" width="16" height="15" viewBox="0 0 16 15"><rect width="16" height="15" fill="#c0c0c0"/><rect x="3.5" y="1.5" width="8" height="7" fill="#f0f060" stroke="#000" stroke-width="0.9"/><circle cx="10.5" cy="9.5" r="3.6" fill="#f0f060" stroke="#808000" stroke-width="0.8"/><path d="M1.5 8.5 H4.5 M3 7.5 V10" stroke="#000" stroke-width="0.9"/></svg>
<svg class="abs" style="left:10px;top:403px" width="16" height="15" viewBox="0 0 16 15"><rect width="16" height="15" fill="#c0c0c0"/><circle cx="7.5" cy="8" r="1.5" fill="#a00000"/></svg>
<svg class="abs" style="left:10px;top:426px" width="16" height="15" viewBox="0 0 16 15"><rect width="16" height="15" fill="#c0c0c0"/><rect x="2.5" y="2.5" width="10" height="10" fill="#fff" stroke="#a00000" stroke-width="1.3"/><path d="M3 6 L6.5 2.5 M3 9.5 L10 2.5 M3.5 12.5 L12.5 3.5 M7 12.5 L12.5 7 M10.5 12.5 L12.5 10.5" stroke="#a00000" stroke-width="1.3"/><path d="M2.5 0 V15 M12.5 0 V15 M0 2.5 H15.5 M0 12.5 H15.5" stroke="#000" stroke-width="0.7"/></svg>
<svg class="abs" style="left:10px;top:449px" width="16" height="15" viewBox="0 0 16 15"><rect width="16" height="15" fill="#c0c0c0"/><path d="M2.5 2.5 H9.5 L13.5 6.5 V12.5 H2.5 Z" fill="#fff" stroke="#000" stroke-width="1.1"/><circle cx="7.5" cy="7.8" r="2.2" fill="#fff" stroke="#000" stroke-width="1"/></svg>
<svg class="abs" style="left:10px;top:472px" width="16" height="15" viewBox="0 0 16 15"><rect width="16" height="15" fill="#c0c0c0"/><text x="0.2" y="14.6" font-family="Liberation Serif,serif" font-size="21" fill="#000">A</text></svg>
<svg class="abs" style="left:37px;top:127px" width="16" height="15" viewBox="0 0 16 15"><rect width="16" height="15" fill="#c0c0c0"/><path d="M0.5 13 H15.5" stroke="#000" stroke-width="1.2"/><path d="M5 10 L8 7 L11 10 L8 12.5 Z" fill="#a000a0"/><path d="M8 7 L10 5 L13 8 L11 10 Z" fill="#fff"/><path d="M10 5 L14 1 L16 3.5 L13 8 Z" fill="#f0f020"/><path d="M5 10 L14 1" stroke="#505000" stroke-width="0.5"/></svg>
<svg class="abs" style="left:37px;top:150px" width="16" height="15" viewBox="0 0 16 15"><rect width="16" height="15" fill="#c0c0c0"/><circle cx="4" cy="3.8" r="2.7" fill="#fff" stroke="#000" stroke-width="0.9"/><circle cx="10.5" cy="9.5" r="2.9" fill="#fff" stroke="#000" stroke-width="0.9"/><circle cx="12.5" cy="12" r="2.7" fill="#fff" stroke="#000" stroke-width="0.9"/><path d="M8.5 2.5 L12.5 5.5 M12.5 5.5 L12.2 3.2 M12.5 5.5 L10.2 5.6" stroke="#000" stroke-width="0.9" fill="none"/></svg>
<svg class="abs" style="left:37px;top:173px" width="16" height="15" viewBox="0 0 16 15"><rect width="16" height="15" fill="#c0c0c0"/><path d="M6 2 V13.5 H1.5 Z" fill="#fff" stroke="#000" stroke-width="1"/><path d="M10 2 V13.5 H14.5 Z" fill="#fff" stroke="#000" stroke-width="1"/><path d="M8 0 V15" stroke="#a00000" stroke-width="1"/></svg>
<svg class="abs" style="left:37px;top:196px" width="16" height="15" viewBox="0 0 16 15"><rect width="16" height="15" fill="#c0c0c0"/><path d="M6 5 C6 0.5,10.5 0.5,10.5 5 V7 H13 C16.5 7,16.5 13.5,13 13.5 H3 C-0.5 13.5,-0.5 7,3 7 H6 Z" fill="#fff" stroke="#a00000" stroke-width="1"/><path d="M7.5 5 C7.5 3,9 3,9 5 V8.5 H12.5 C14 8.5,14 11.5,12.5 11.5 H3.5 C2 11.5,2 8.5,3.5 8.5 H7.5 Z" fill="#f0a0a0" stroke="#a00000" stroke-width="0.8"/></svg>
<svg class="abs" style="left:37px;top:219px" width="16" height="15" viewBox="0 0 16 15"><rect width="16" height="15" fill="#c0c0c0"/><rect x="1.5" y="1" width="5" height="5" fill="#fff" stroke="#000" stroke-width="1.2"/><rect x="9.5" y="1" width="5" height="5" fill="#fff" stroke="#000" stroke-width="1.2"/><rect x="1.5" y="8.5" width="5" height="5" fill="#fff" stroke="#000" stroke-width="1.2"/><rect x="9.5" y="8.5" width="5" height="5" fill="#fff" stroke="#000" stroke-width="1.2"/></svg>
<svg class="abs" style="left:37px;top:242px" width="16" height="15" viewBox="0 0 16 15"><rect width="16" height="15" fill="#c0c0c0"/><path d="M8 1 V14 M1.5 7.5 H14.5" stroke="#000" stroke-width="1.2"/><path d="M8 0 L5.8 3 H10.2 Z M8 15 L5.8 12 H10.2 Z M0.5 7.5 L3.5 5.3 V9.7 Z M15.5 7.5 L12.5 5.3 V9.7 Z" fill="#000"/></svg>
<svg class="abs" style="left:37px;top:265px" width="16" height="15" viewBox="0 0 16 15"><rect width="16" height="15" fill="#c0c0c0"/><path d="M5 4.5 A5 5 0 1 0 11.5 4.5" fill="none" stroke="#000" stroke-width="1.8"/><path d="M8 1 L3.5 3 L7 6.5 Z" fill="#000"/></svg>
<svg class="abs" style="left:37px;top:288px" width="16" height="15" viewBox="0 0 16 15"><rect width="16" height="15" fill="#c0c0c0"/><rect x="2.5" y="1.5" width="11" height="11" fill="#fff" stroke="#a00000" stroke-width="1.1"/><rect x="2.5" y="7" width="5.5" height="5.5" fill="#fff" stroke="#000" stroke-width="1.2" stroke-dasharray="1.2 1.2"/></svg>
<svg class="abs" style="left:37px;top:311px" width="16" height="15" viewBox="0 0 16 15"><rect width="16" height="15" fill="#c0c0c0"/><path d="M1.5 2.5 H9 L14.5 12.5 H1.5 Z" fill="#fff" stroke="#000" stroke-width="1.1"/><path d="M9 2.5 V12.5" stroke="#000" stroke-width="0.9" stroke-dasharray="1.2 1.2"/><path d="M9 2.5 L14.5 12.5" stroke="#a00000" stroke-width="0.8"/></svg>
<svg class="abs" style="left:37px;top:334px" width="16" height="15" viewBox="0 0 16 15"><rect width="16" height="15" fill="#c0c0c0"/><path d="M2.5 13 L9 6.5" stroke="#000" stroke-width="1.1"/><path d="M9 6.5 L14 1.5" stroke="#a00000" stroke-width="1.1" stroke-dasharray="1.5 1"/><circle cx="2.5" cy="13" r="1.3" fill="#a00000"/><circle cx="14" cy="1.8" r="1.3" fill="#a00000"/></svg>
<svg class="abs" style="left:37px;top:357px" width="16" height="15" viewBox="0 0 16 15"><rect width="16" height="15" fill="#c0c0c0"/><path d="M10 0.5 L5.5 14.5" stroke="#000" stroke-width="1.2"/><path d="M1 7.5 H7.5" stroke="#000" stroke-width="1.8"/><path d="M8.5 7.5 H15.5" stroke="#d00000" stroke-width="1.6" stroke-dasharray="1.6 1"/></svg>
<svg class="abs" style="left:37px;top:380px" width="16" height="15" viewBox="0 0 16 15"><rect width="16" height="15" fill="#c0c0c0"/><path d="M15 0.5 L10.5 14.5" stroke="#000" stroke-width="1.2"/><path d="M0.5 5.5 H6.5" stroke="#000" stroke-width="1.8"/><path d="M7.5 5.5 H12" stroke="#d00000" stroke-width="1.6" stroke-dasharray="1.6 1"/></svg>
<svg class="abs" style="left:37px;top:403px" width="16" height="15" viewBox="0 0 16 15"><rect width="16" height="15" fill="#c0c0c0"/><path d="M1.5 3.5 V12.5 H14.5 V3.5" fill="#fff" stroke="#000" stroke-width="1.1"/><rect x="1.5" y="3.5" width="13" height="9" fill="#fff" stroke="none"/><path d="M1.5 3.5 V12.5 H14.5 V3.5 M1.5 3.5 H4 M12 3.5 H14.5" fill="none" stroke="#000" stroke-width="1.1"/><circle cx="4.5" cy="3.5" r="1.3" fill="#a00000"/><circle cx="11.5" cy="3.5" r="1.3" fill="#a00000"/></svg>
<svg class="abs" style="left:37px;top:426px" width="16" height="15" viewBox="0 0 16 15"><rect width="16" height="15" fill="#c0c0c0"/><path d="M2.5 15 V7.5 L8 2 H15.5" fill="none" stroke="#000" stroke-width="1.2"/><path d="M2.5 7 V2 H8" fill="none" stroke="#000" stroke-width="0.9" stroke-dasharray="1 1"/></svg>
<svg class="abs" style="left:37px;top:449px" width="16" height="15" viewBox="0 0 16 15"><rect width="16" height="15" fill="#c0c0c0"/><path d="M2.5 15 V9 C2.5 5,5.5 2,9.5 2 H15.5" fill="none" stroke="#000" stroke-width="1.2"/><path d="M2.5 8 V2 H9" fill="none" stroke="#000" stroke-width="0.9" stroke-dasharray="1 1"/></svg>
<svg class="abs" style="left:37px;top:472px" width="16" height="15" viewBox="0 0 16 15"><rect width="16" height="15" fill="#c0c0c0"/><path d="M1.5 13 L8.5 5 L11 7.5 L3.5 14.5 Z" fill="#c81818" stroke="#600000" stroke-width="0.7"/><path d="M2.5 12.5 L8.5 6" stroke="#ff8080" stroke-width="0.8"/><path d="M10 6 L12 3.5" stroke="#000" stroke-width="0.9"/><path d="M12 3 L12 0.5 M12.8 3.2 L15 1 M13.2 4 L15.8 4 M12.8 4.8 L14.5 6.5 M11.2 2.8 L9.8 1" stroke="#d00000" stroke-width="0.8" stroke-dasharray="1 0.7"/></svg>
<div class="abs" style="left:30px;top:113px;width:1px;height:384px;background:#aca899"></div><div class="abs" style="left:31px;top:113px;width:1px;height:384px;background:#fff"></div>
<div class="abs" style="left:57px;top:113px;width:1px;height:384px;background:#aca899"></div><div class="abs" style="left:58px;top:113px;width:1px;height:384px;background:#fff"></div>
<div class="abs" style="left:6px;top:496px;width:24px;height:1px;background:#aca899"></div><div class="abs" style="left:33px;top:496px;width:24px;height:1px;background:#aca899"></div>
<!-- dimension toolbar -->
<div class="abs" style="left:750px;top:113px;width:1px;height:424px;background:#fff"></div><div class="abs" style="left:751px;top:526px;width:23px;height:1px;background:#aca899"></div><div class="abs" style="left:751px;top:527px;width:23px;height:1px;background:#fff"></div>
<div class="abs" style="left:755px;top:117px;width:19px;height:2px;background:#fff;border-bottom:1px solid #aca899;box-sizing:border-box"></div>
<div class="abs" style="left:755px;top:121px;width:19px;height:2px;background:#fff;border-bottom:1px solid #aca899;box-sizing:border-box"></div>
<svg class="abs" style="left:756px;top:127px" width="16" height="15" viewBox="0 0 16 15"><rect width="16" height="15" fill="#c0c0c0"/><path d="M1 1 V14 M15 1 V14" stroke="#000" stroke-width="1.3"/><path d="M1 7.5 H15" stroke="#000" stroke-width="1.2"/><path d="M1 7.5 L5 5.3 V9.7 Z M15 7.5 L11 5.3 V9.7 Z" fill="#000"/></svg>
<svg class="abs" style="left:756px;top:150px" width="16" height="15" viewBox="0 0 16 15"><rect width="16" height="15" fill="#c0c0c0"/><path d="M0.5 4.5 L5.5 0 M10 14.5 L15 10" stroke="#000" stroke-width="1.1"/><path d="M3.5 3 L12.5 12" stroke="#000" stroke-width="1.2"/><path d="M3 2.5 L7.5 4 L4.5 7 Z M13 12.5 L8.5 11 L11.5 8 Z" fill="#000"/></svg>
<svg class="abs" style="left:756px;top:173px" width="16" height="15" viewBox="0 0 16 15"><rect width="16" height="15" fill="#c0c0c0"/><text x="0" y="8" font-family="Liberation Sans,sans-serif" font-size="6.5" font-weight="bold" fill="#000">Y</text><text x="0" y="14.5" font-family="Liberation Sans,sans-serif" font-size="6.5" font-weight="bold" fill="#000">0</text><path d="M5 12.5 H15 M8.5 1 V15 M5 6 H9 M12.5 5 V14" stroke="#000" stroke-width="1"/><path d="M10 5.5 H15" stroke="#000" stroke-width="0.8"/><text x="6" y="4" font-family="Liberation Sans,sans-serif" font-size="5" fill="#000">o</text></svg>
<div class="abs" style="left:754px;top:194px;width:20px;height:1px;background:#aca899"></div><div class="abs" style="left:754px;top:195px;width:20px;height:1px;background:#fff"></div>
<svg class="abs" style="left:756px;top:202px" width="16" height="15" viewBox="0 0 16 15"><rect width="16" height="15" fill="#c0c0c0"/><circle cx="8" cy="7.5" r="6.5" fill="#c8c8c8" stroke="#000" stroke-width="0.9"/><path d="M8.5 8 L4 3.5" stroke="#000" stroke-width="1"/><path d="M3.5 3 L7 4 L4.5 6.5 Z" fill="#000"/></svg>
<svg class="abs" style="left:756px;top:225px" width="16" height="15" viewBox="0 0 16 15"><rect width="16" height="15" fill="#c0c0c0"/><circle cx="8" cy="7.5" r="6.5" fill="#c8c8c8" stroke="#000" stroke-width="0.9"/><path d="M4 3.5 L12 11.5" stroke="#000" stroke-width="1"/><path d="M3.5 3 L7 4 L4.5 6.5 Z M12.5 12 L9 11 L11.5 8.5 Z" fill="#000"/></svg>
<svg class="abs" style="left:756px;top:248px" width="16" height="15" viewBox="0 0 16 15"><rect width="16" height="15" fill="#c0c0c0"/><path d="M1 13.5 H15 M1 13.5 L11.5 1.5" stroke="#000" stroke-width="1.2"/><path d="M8 5.5 C11 7,12.5 9.5,13 12.5" fill="none" stroke="#000" stroke-width="0.9"/><path d="M7 4.8 L10.5 5 L8.5 7.5 Z M13.2 13.5 L11.3 10.5 L14.5 10.2 Z" fill="#000"/></svg>
<div class="abs" style="left:754px;top:269px;width:20px;height:1px;background:#aca899"></div><div class="abs" style="left:754px;top:270px;width:20px;height:1px;background:#fff"></div>
<svg class="abs" style="left:756px;top:277px" width="16" height="15" viewBox="0 0 16 15"><rect width="16" height="15" fill="#c0c0c0"/><path d="M1 1 V12 M13 1 V12" stroke="#000" stroke-width="1.2"/><path d="M1 5.5 H13" stroke="#000" stroke-width="1.1"/><path d="M1 5.5 L4.5 3.5 V7.5 Z M13 5.5 L9.5 3.5 V7.5 Z" fill="#000"/><path d="M13 7 L9.5 11.5 H12 L10.5 15 L15.5 10 H13 L15 7 Z" fill="#f8f020" stroke="#a09000" stroke-width="0.4"/></svg>
<svg class="abs" style="left:756px;top:300px" width="16" height="15" viewBox="0 0 16 15"><rect width="16" height="15" fill="#c0c0c0"/><path d="M1.5 0.5 V14.5 M8.5 5 V14.5 M14.5 0.5 V14.5" stroke="#000" stroke-width="1.1"/><path d="M1.5 3 H14.5 M1.5 10 H8.5" stroke="#000" stroke-width="1"/><path d="M1.5 3 L4.5 1.4 V4.6 Z M14.5 3 L11.5 1.4 V4.6 Z M1.5 10 L4 8.5 V11.5 Z M8.5 10 L6 8.5 V11.5 Z" fill="#000"/></svg>
<svg class="abs" style="left:756px;top:323px" width="16" height="15" viewBox="0 0 16 15"><rect width="16" height="15" fill="#c0c0c0"/><path d="M1.5 3 V14.5 M6 3 V14.5 M10.5 3 V14.5 M15 3 V14.5" stroke="#000" stroke-width="1.1"/><path d="M1.5 8.5 H15" stroke="#000" stroke-width="1"/><path d="M1.5 8.5 L3.5 7 V10 Z M6 8.5 L4 7 V10 Z M6 8.5 L8 7 V10 Z M10.5 8.5 L8.5 7 V10 Z M10.5 8.5 L12.5 7 V10 Z M15 8.5 L13 7 V10 Z" fill="#000"/></svg>
<div class="abs" style="left:754px;top:344px;width:20px;height:1px;background:#aca899"></div><div class="abs" style="left:754px;top:345px;width:20px;height:1px;background:#fff"></div>
<svg class="abs" style="left:756px;top:352px" width="16" height="15" viewBox="0 0 16 15"><rect width="16" height="15" fill="#c0c0c0"/><path d="M1.5 12.5 C3 8,5 6,8 5.5" fill="none" stroke="#000" stroke-width="1"/><path d="M0.5 14.5 L1 10.5 L4 12.5 Z" fill="#000"/><text x="8" y="7" font-family="Liberation Sans,sans-serif" font-size="8" fill="#000">A</text><path d="M13 6.5 L10 11 H12.3 L11 15 L15.8 9.5 H13.5 L15 6.5 Z" fill="#f8f020" stroke="#a09000" stroke-width="0.4"/></svg>
<svg class="abs" style="left:756px;top:375px" width="16" height="15" viewBox="0 0 16 15"><rect width="16" height="15" fill="#c0c0c0"/><rect x="0.8" y="3.5" width="14.4" height="8" fill="#fff" stroke="#000" stroke-width="1.2"/><path d="M8 3.5 V11.5" stroke="#000" stroke-width="1"/><circle cx="4.4" cy="7.5" r="1.8" fill="none" stroke="#000" stroke-width="0.9"/><path d="M4.4 4.8 V10.2 M1.8 7.5 H7" stroke="#000" stroke-width="0.6"/><text x="9.2" y="10.3" font-family="Liberation Sans,sans-serif" font-size="7" font-weight="bold" fill="#000">.1</text></svg>
<svg class="abs" style="left:756px;top:398px" width="16" height="15" viewBox="0 0 16 15"><rect width="16" height="15" fill="#c0c0c0"/><circle cx="8" cy="7.5" r="6.5" fill="#c8c8c8" stroke="#000" stroke-width="0.9"/><path d="M5.5 7.5 H10.5 M8 5 V10" stroke="#000" stroke-width="1.1"/></svg>
<div class="abs" style="left:754px;top:419px;width:20px;height:1px;background:#aca899"></div><div class="abs" style="left:754px;top:420px;width:20px;height:1px;background:#fff"></div>
<svg class="abs" style="left:756px;top:427px" width="16" height="15" viewBox="0 0 16 15"><rect width="16" height="15" fill="#c0c0c0"/><text x="3.5" y="8" font-family="Liberation Sans,sans-serif" font-size="10" fill="#a00000">A</text><path d="M1.5 7 V15 M14.5 7 V15" stroke="#000" stroke-width="1.1"/><path d="M1.5 11.5 H14.5" stroke="#000" stroke-width="1"/><path d="M1.5 11.5 L4.5 9.8 V13.2 Z M14.5 11.5 L11.5 9.8 V13.2 Z" fill="#000"/></svg>
<svg class="abs" style="left:756px;top:450px" width="16" height="15" viewBox="0 0 16 15"><rect width="16" height="15" fill="#c0c0c0"/><text x="3" y="9" font-family="Liberation Sans,sans-serif" font-size="10" fill="#000">A</text><text x="9" y="6" font-family="Liberation Sans,sans-serif" font-size="7" fill="#808080">A</text><path d="M1.5 8 V15 M14.5 8 V15" stroke="#000" stroke-width="1.1"/><path d="M1.5 12 H14.5" stroke="#000" stroke-width="1"/><path d="M1.5 12 L4.5 10.3 V13.7 Z M14.5 12 L11.5 10.3 V13.7 Z" fill="#000"/></svg>
<svg class="abs" style="left:756px;top:473px" width="16" height="15" viewBox="0 0 16 15"><rect width="16" height="15" fill="#c0c0c0"/><path d="M2.5 2 V14.5 M12.5 0.5 V14.5" stroke="#a00000" stroke-width="1.2"/><path d="M6.5 3 V14.5 M10 3 V14.5" stroke="#000" stroke-width="1"/><path d="M2.5 8.5 H12.5" stroke="#a00000" stroke-width="1.1"/><path d="M2.5 8.5 L5.5 6.5 V10.5 Z M12.5 8.5 L9.5 6.5 V10.5 Z" fill="#a00000"/><path d="M2.5 4 H12.5" stroke="#a00000" stroke-width="0.8"/></svg>
<div class="abs" style="left:754px;top:494px;width:20px;height:1px;background:#aca899"></div><div class="abs" style="left:754px;top:495px;width:20px;height:1px;background:#fff"></div>
<svg class="abs" style="left:756px;top:502px" width="16" height="15" viewBox="0 0 16 15"><rect width="16" height="15" fill="#c0c0c0"/><path d="M1.5 0.5 V9 M14.5 0.5 V12" stroke="#000" stroke-width="1.2"/><path d="M1.5 4 H14.5" stroke="#000" stroke-width="1.1"/><path d="M1.5 4 L5 2 V6 Z M14.5 4 L11 2 V6 Z" fill="#000"/><circle cx="4.5" cy="9.5" r="3" fill="#c8f0f8" stroke="#000" stroke-width="1"/><path d="M6.5 11.5 L10 15" stroke="#000" stroke-width="1.8"/></svg>
<div class="abs" style="left:765px;top:165px;width:12px;height:13px;box-sizing:border-box;border:1px solid #000;background:#ffffe1"><svg width="10" height="11" viewBox="0 0 10 11"><path d="M3 7 L6 3 L9 5 M4 8.5 H9" stroke="#000" stroke-width="0.8" fill="none"/></svg></div>
<div class="abs" style="left:59px;top:113px;width:690px;height:408px;background:#aca899"></div>
<div class="abs" style="left:60px;top:114px;width:689px;height:407px;background:#5a584e"></div>
<div class="abs" style="left:61px;top:115px;width:670px;height:406px;background:#000"></div>
<svg class="abs" style="left:60px;top:113px" width="671" height="408" viewBox="60 113 671 408" shape-rendering="crispEdges">
<path d="M130.4 412 L132.3 381.3 L134.3 332.7 L135.2 295.8 L151.7 354.1 L178 335.6 L128.4 367.7 L212.9 331.7 L184.8 367.7 L129.4 410 L117 425 M211 345.3 L116.8 385.1 M183.8 341.5 L179.9 383.2 L176 410 L172 440 M116.8 358 L174.1 357 L122 362.5 L172 359 L116.8 361.5 M116.8 367.7 L174 406.5 L150 425 M116.8 387.1 L164.4 410 L185 425 M116.8 398.7 L145 397.8 L129.4 410 L117 420 M162.4 412 L164.4 376.4 L189.6 410 L181.8 391 L181.8 412 M189.6 410 L198 428 M116.8 378 L131.4 379.3 L117 372 M117 395 L160 398 L117 415 M129.8 440.2 L269.2 439.3 L117.7 443.9 L224.2 446.1 L117.7 450.5 L162.7 401.1 M117.7 472.5 L269.2 472 L117.7 465.9 L244 456.2 L117.7 457.5 L252.8 457.5 M117.7 496.6 L213.2 426.4 L117.7 487.9 L197.9 411 L117.7 476.9 L186.9 419.8 L117.7 465.9 L175.9 422 M118.8 413.2 L164.9 406.6 M115.5 427.5 L160.5 427.5 M129.8 400 L130.9 437.3 M181.4 400 L181.4 465.9 M175.9 400 L184.7 428.6 L202.2 465.9 M186.9 400 L213.2 459.3 M132 413.2 L162.7 441.7 M162.7 404.4 L132 435.1 M117.7 492.2 L244 489 L219.8 497.7 M117.7 483.5 L226.4 474.7 L117.7 474.7 L226.4 447.2 L117.7 470.3 L215.4 440.6 L117.7 461.5 L202.2 432.9 M142.9 439.5 L219.8 474.7 M153.9 437.3 L213.2 478 M164.9 432.9 L197.9 496.6 M117.7 490.1 L197.9 472.5 L117.7 479.1 L241.8 472.9 M117.7 494.4 L186.9 487.9 L169.3 497.7 M117.7 497.7 L167.1 476.9 M184.7 497.7 L202.2 476.9 M117.7 452.7 L193.5 451.6 L136.4 463.7 L206.6 454.9 L132 459.3 L182.5 447.2 L145.1 465.9 L195.7 441.7 L149.5 472.5 L175.9 435.1 M123.2 472.5 L175.9 454.9 L129.8 479.1 L189.1 461.5 L123.2 486.8 L182.5 465.9 M153.9 443.9 L182.5 463.7 L167.1 441.7 L160.5 470.3 L175.9 448.3 M117.7 432.9 L149.5 454.9 L117.7 463.7 M138.6 452.7 L224.2 465.9 M117.7 447.2 L175.9 479.1 M202.2 443.9 L233 452.7 L204.4 459.3 M160 427 L240 439.2 M215.5 445.7 L252.7 456.6 L200 461.2 L231 470.5" fill="none" stroke="#ff0000" stroke-width="1"/>
<path d="M631 366 L628.5 378 L625 390 L620 401 L613 412 L604 423 L595 433 L586.4 443.5 L586.4 443.5 L586.4 433.4 L590.5 432.9 L591 430.2 L594.6 428.4 L595 424.8 L599 424 L599.4 420.7 L603.5 420.4 L603.9 417.7 L608 416.8 L608.3 410.6 L612.4 409.7 L612.8 406.1 L615.4 403.5 L616 399.5 L619.5 398.1 L619.9 391 L623.5 388.3 L623.5 376.4 L626.7 375 L626.7 367.8 L629.7 366.4 Z" fill="#fff" stroke="none"/>
<path d="M116.5 232.5 L116.5 139.5 L675.5 139.5 L675.5 498.5 L116.5 498.5 L116.5 275 M190.5 139.5 C191 143 190 143.5 192 150 C194 156.5 192.5 153.7 196.5 159 C200.5 164.3 198.5 162.3 204 166 C209.5 169.7 207.7 168.2 213 170 C218.3 171.8 217.7 170.9 220 171.3 M220 171.3 C228.7 171.6 226 172.4 246 172.3 C266 172.2 257.4 172 280 171 C302.6 170 283.7 170.7 313.7 169.4 C343.7 168.1 334.6 168.4 370 167 C405.4 165.6 390 166 420 165.3 C450 164.6 433.5 165 460 165 C486.5 165 472.8 164.5 499.5 165.3 C526.2 166.1 513.2 165.9 540 167.5 C566.8 169.1 565.3 169.1 580 170 C594.7 170.9 582.7 170.1 584 170.2 M584 170.2 C585.5 171 586.3 169.9 588.5 172.5 C590.7 175.1 589.8 170.5 590.5 178 C591.2 185.5 590 186.7 590.5 195 C591 203.3 590.5 198.2 592 203 C593.5 207.8 591 205 595 209.5 C599 214 597.8 212.3 604 216.5 C610.2 220.7 610.3 220.2 613.5 222 M613.5 222 L613 240 L612 259.5 L626 263 L626.5 280 L627 303 L628 325 L627.5 341 M318.3 169.5 C318.9 172 318.1 171.3 320 177 C321.9 182.7 320.3 180.8 324 186.5 C327.7 192.2 325.7 189 331 194 C336.3 199 334.7 196.8 340 201.5 C345.3 206.2 343 203.5 347 208 C351 212.5 349.3 210 352 215 C354.7 220 353.2 214.7 355 223 C356.8 231.3 356.8 230 357.5 240 C358.2 250 358 243 357 253 C356 263 355.8 259.3 354.5 270 C353.2 280.7 353.3 275.7 353 285 C352.7 294.3 352.8 290.7 353.5 298 C354.2 305.3 353.8 301.3 355 307 C356.2 312.7 355.3 309 357 315 C358.7 321 358.3 319.3 360 325 C361.7 330.7 359.7 325.7 362 332 C364.3 338.3 363.3 336 367 344 C370.7 352 369.2 349.3 373 356 C376.8 362.7 372.8 356.3 378.5 364 C384.2 371.7 382.8 369.7 390 379 C397.2 388.3 393.3 383.7 400 392 C406.7 400.3 403.3 396 410 404 C416.7 412 415.3 409 420 416 C424.7 423 421.7 417 424 425 C426.3 433 424.7 430 427 440 C429.3 450 428 446 431 455 C434 464 432.3 460.3 436 467 C439.7 473.7 437.3 470.7 442 475 C446.7 479.3 444 476.8 450 480 C456 483.2 453.3 482.2 460 484.5 C466.7 486.8 462.7 486 470 487 C477.3 488 473.7 487.8 482 487.5 C490.3 487.2 485.7 487.7 495 486 C504.3 484.3 500 485.2 510 482.5 C520 479.8 515 481.3 525 478 C535 474.7 529.3 477 540 472.5 C550.7 468 551.3 467.2 557 464.5 M340 201.5 L380.5 190 L351 206 L345.8 206.5 M378 183.5 L379.5 185 M398.5 196.3 C397.5 198.9 396.9 198.8 395.5 204 C394.1 209.2 394.5 206.8 394.3 211.8 C394.1 216.8 394.1 214.6 394.8 219 C395.5 223.4 394 220.3 396.4 225 C398.8 229.7 398.1 228 402 233 C405.9 238 402 234.1 408 240 C414 245.9 414.3 245.1 420 250.8 C425.7 256.5 422 252.3 425 257 C428 261.7 427 259 429 265 C431 271 430.7 267.7 431 275 C431.3 282.3 431.3 279.7 430 287 C428.7 294.3 429 290.3 427 297 C425 303.7 426 300.7 424 307 C422 313.3 423.5 309.7 421 316 C418.5 322.3 418.3 318.7 416.5 326 C414.7 333.3 415.7 331.3 415.5 338 C415.3 344.7 415 341.3 415.8 346 C416.6 350.7 416.6 349 418 352 C419.4 355 417.3 352.5 420 355 C422.7 357.5 421.3 357.3 426 359.5 C430.7 361.7 428 361.3 434 361.5 C440 361.7 437.7 362 444 360 C450.3 358 447 358.5 453 355.5 C459 352.5 456.3 353 462 351 C467.7 349 464.7 349.7 470 349.5 C475.3 349.3 472 349 478 350.5 C484 352 481.7 351.3 488 354 C494.3 356.7 491.7 355.7 497 358.5 C502.3 361.3 501.7 361.2 504 362.5 M416 349 C414.5 352 414.5 352.5 411.5 358 C408.5 363.5 408.5 363 407 365.5 M361.2 233.7 C362.6 233.3 359.6 233.7 365.5 232.5 C371.4 231.3 372 230.3 379 230 C386 229.7 381.2 229.8 386.5 231.5 C391.8 233.2 390.3 230.8 395 235 C399.7 239.2 399.8 239.7 400.5 244 C401.2 248.3 400.5 245.5 397 248 C393.5 250.5 395 250.8 390 251.5 C385 252.2 388 251.2 382 250 C376 248.8 376.7 249.7 372 248 C367.3 246.3 370.2 250.2 368 245 C365.8 239.8 366.3 236.7 365.5 232.5 M365 253 C367.3 254 366.7 254.5 372 256 C377.3 257.5 375 257.5 381 257.5 C387 257.5 384 257.7 390 256 C396 254.3 396 253.7 399 252.5 M452 184.3 C450.7 184.9 449.6 184.3 448 186 C446.4 187.7 447.5 188.3 447.3 189.5 M450.6 190.7 L552.2 219 L552.5 222.5 L471.7 207.6 L468.6 204.3 L466.5 199.5 L464.4 198 L451 194.2 Z M562.6 209 C562.7 210.5 563.7 211 563 213.5 C562.3 216 562.7 214.8 560.5 216.5 C558.3 218.2 557.8 217.8 556.5 218.5 M498.5 218.4 L490.2 224.2 M457.2 247.3 L474 237.4 L477.5 238 L478 239.5 L461.3 248.8 Z M490.2 225 C489.9 226.3 489.6 226.2 489.3 229 C489 231.8 489.3 232 489.3 233.5 M502.2 226 C504.1 226.5 502.1 226.2 508 227.5 C513.9 228.8 512.3 228.2 520 230 C527.7 231.8 524.3 231 531 233 C537.7 235 535.7 234.5 540 236 C544.3 237.5 542.7 237 544 237.5 M507.5 228 C506.5 229.7 507.5 229.8 504.5 233 C501.5 236.2 500.5 236 498.5 237.5 M498.5 237.5 C500.7 238.7 500.2 238.5 505 241 C509.8 243.5 507.3 243.2 513 245 C518.7 246.8 516.3 246.7 522 246.5 C527.7 246.3 525.3 246.3 530 244.5 C534.7 242.7 532.2 243.5 536 241 C539.8 238.5 538.8 238.7 541.5 237 C544.2 235.3 543.2 236.3 544 236 M502.6 248.3 C504.7 249.2 504.4 249.3 509 251 C513.6 252.7 511.5 253.2 516.5 253.5 C521.5 253.8 518.8 253 524 252 C529.2 251 529.3 251 532 250.5 M546.4 235 L557.5 233.3 M544 239 L558 240.5 M542 242.6 C544.3 243.6 543.8 244.2 549 245.5 C554.2 246.8 554.7 246.2 557.5 246.5 M481 256.4 C483 256.8 483.3 256.3 487 257.5 C490.7 258.7 488.5 257.7 492 260 C495.5 262.3 495.7 263 497.5 264.5 M480.5 266.3 L464.5 295 M484 271.5 L500 281.5 M478.3 280.4 L496 290.5 M470.6 292 L490 301.5 M506.8 270 C506.5 272.7 506.8 271.3 506 278 C505.2 284.7 505 282 504.5 290 C504 298 503.7 295.3 504.5 302 C505.3 308.7 504.7 304.8 507 310 C509.3 315.2 508.5 313.2 511.5 317.5 C514.5 321.8 513.4 320.5 516 323 C518.6 325.5 512.9 320.5 519.2 325 C525.5 329.5 529.7 332.7 535 336.5 M458.8 304 C458.2 306.7 457.9 306.7 457 312 C456.1 317.3 456.3 315.7 456 320 C455.7 324.3 454.5 322.2 456.2 325 C457.9 327.8 457.4 326.8 461 328.5 C464.6 330.2 462.7 329.5 467 330 C471.3 330.5 469.3 330.3 474 330 C478.7 329.7 478.7 329.3 481 329 M493.3 335.3 C496.5 335.7 496.1 335.4 503 336.5 C509.9 337.6 506.3 337 514 338.5 C521.7 340 522 340.2 526 341 M514.5 339 C513.7 342.7 513.8 343.7 512 350 C510.2 356.3 511.7 353.8 509 358 C506.3 362.2 505.7 361 504 362.5 M568.4 257 L588 291 M563.6 258 L585.5 297.5 M558.4 265.3 L582 301 M552.2 284.3 C554.8 286.9 554.9 286.4 560 292 C565.1 297.6 563.8 295 567.5 301 C571.2 307 569 303.7 571 310 C573 316.3 572.3 314.7 573.5 320 C574.7 325.3 574.2 324 574.5 326 M625.5 248.8 C626.7 246.5 626.2 244.9 629 242 C631.8 239.1 630.5 239.7 634 240 C637.5 240.3 636.3 240.2 639.5 243 C642.7 245.8 641.7 244.2 643.5 248.5 C645.3 252.8 644.8 249.5 645 256 C645.2 262.5 645 260 644 268 C643 276 643.2 272.3 642 280 C640.8 287.7 641.8 285.7 640.5 291 C639.2 296.3 640.2 294 638 296 C635.8 298 636.7 297.3 634 297 C631.3 296.7 632 297.3 630 295 C628 292.7 628.5 293.7 628 290 C627.5 286.3 627.8 288 628.5 284 C629.2 280 629.5 280 630 278 M630.2 254.5 C631.5 253.7 631.6 253.2 634 252 C636.4 250.8 635.8 250.3 637.5 251 C639.2 251.7 638.8 250.3 639 254 C639.2 257.7 639 257.3 638 262 C637 266.7 637.2 264 636 268 C634.8 272 635 272 634.5 274 M645.5 231.2 C645.7 234.1 645.3 230.4 646 240 C646.7 249.6 646.7 247.3 647.5 260 C648.3 272.7 648.2 268.7 648.5 278 C648.8 287.3 649.7 281.7 648.5 288 C647.3 294.3 647.5 290.3 645 297 C642.5 303.7 643.7 300.7 641 308 C638.3 315.3 639.2 313.3 637 319 C634.8 324.7 636.3 318 634.5 325 C632.7 332 632.4 331 631.5 340 C630.6 349 632 343.3 631.8 352 C631.6 360.7 632.1 357.3 631 366 C629.9 374.7 630.5 370 628.5 378 C626.5 386 627.8 382.3 625 390 C622.2 397.7 624 393.7 620 401 C616 408.3 618.3 404.7 613 412 C607.7 419.3 610 416 604 423 C598 430 600.8 426.2 595 433 C589.2 439.8 591.5 437.8 586.5 443.5 C581.5 449.2 584.8 444.8 580 450 C575.2 455.2 574.7 456 572 459 M356 313.5 L295 344.5 M295 344.5 C291 343.8 290.7 343.7 283 342.5 C275.3 341.3 279.7 340.7 272 341 C264.3 341.3 267.3 342.2 260 343.5 C252.7 344.8 257.3 343.2 250 345 C242.7 346.8 245.3 346 238 349 C230.7 352 234 350 228 354 C222 358 224.7 355.7 220 361 C215.3 366.3 217 363.7 214 370 C211 376.3 212 374 211 380 C210 386 210.3 382 211 388 C211.7 394 211 391.3 213 398 C215 404.7 214 402 217 408 C220 414 218 410.7 222 416 C226 421.3 224.3 419 229 424 C233.7 429 231 426.2 236 431 C241 435.8 238.7 433.8 244 438.5 C249.3 443.2 246.7 441.2 252 445 C257.3 448.8 254.7 446.7 260 450 C265.3 453.3 262.3 452 268 455 C273.7 458 271 456.8 277 459 C283 461.2 280.3 460.3 286 461.5 C291.7 462.7 288.7 462.8 294 462.5 C299.3 462.2 297.3 462.3 302 460.5 C306.7 458.7 304.7 459.8 308 457 C311.3 454.2 309.7 456 312 452 C314.3 448 313.3 450.7 315 445 C316.7 439.3 316 441.7 317 435 C318 428.3 317.2 431.7 318 425 C318.8 418.3 318.8 424.2 319.5 415 C320.2 405.8 319.8 403.3 320 397.5 M320 397.5 L378.5 364 M522.3 352.3 L575.4 391.5 M452 366.3 C454 367.7 453.7 368.3 458 370.5 C462.3 372.7 460 372.2 465 373 C470 373.8 468 373.7 473 373 C478 372.3 475.7 372.7 480 371 C484.3 369.3 484 369 486 368 M435.5 379.3 C440.3 380.4 438.5 380.8 450 382.5 C461.5 384.2 456.7 384 470 384.5 C483.3 385 476.7 384.3 490 384 C503.3 383.7 498.3 383.3 510 383.5 C521.7 383.7 516.3 383.5 525 384.5 C533.7 385.5 529.3 384.3 536 386.5 C542.7 388.7 540.5 387.5 545 391 C549.5 394.5 548 395 549.5 397 M441.7 390.7 C446.1 391.3 445.6 391.6 455 392.5 C464.4 393.4 460 393.3 470 393.5 C480 393.7 475 393.8 485 393 C495 392.2 490 392.3 500 391 C510 389.7 505.7 390.3 515 389 C524.3 387.7 521 387.8 528 387 C535 386.2 533.3 386.7 536 386.5 M451 382.5 L450.5 392.5 M468 384.3 L467.5 393.3 M484 384.3 L483.5 393 M503.5 383.5 L503 390.5 M521.5 384.3 L521 388 M435.5 379.3 C437.6 383.1 438.5 384.5 441.7 390.7 C444.9 396.9 442.6 392.2 445 398 C447.4 403.8 446.7 401.3 449 408 C451.3 414.7 450.5 412.3 452 418 C453.5 423.7 452.7 420.3 453.5 425 C454.3 429.7 454.2 425.3 454.5 432 C454.8 438.7 454.3 438.3 454.5 445 C454.7 451.7 454.5 447.5 455 452 C455.5 456.5 455.7 456.3 456 458.5 M544.5 382.5 C545.8 385 546.2 384.2 548.5 390 C550.8 395.8 550.3 393.3 551.5 400 C552.7 406.7 552.8 404 552 410 C551.2 416 551.2 414 549 418 C546.8 422 548.2 419.7 545.5 422 C542.8 424.3 544.5 421.7 541 425 C537.5 428.3 538.7 427.7 535 432 C531.3 436.3 534 434.2 530 438 C526 441.8 528 440.2 523 443.5 C518 446.8 520.3 445 515 448 C509.7 451 513 449.5 507 452.5 C501 455.5 503.7 454.5 497 457 C490.3 459.5 493.3 458.8 487 460 C480.7 461.2 483.7 460.8 478 460.5 C472.3 460.2 475.3 460.5 470 459 C464.7 457.5 466.7 458.3 462 456 C457.3 453.7 458 453.3 456 452 M478.5 401.5 C476.3 403.2 476 402.3 472 406.5 C468 410.7 469.5 409.2 466.5 414 C463.5 418.8 464.5 417.3 463 421 C461.5 424.7 462 420.3 462 425 C462 429.7 462 429.3 463 435 C464 440.7 462.7 438 465 442 C467.3 446 465.7 444.3 470 447 C474.3 449.7 472.3 449.3 478 450 C483.7 450.7 480.7 450.3 487 449 C493.3 447.7 490.3 448.5 497 446 C503.7 443.5 501 444.5 507 441.5 C513 438.5 509.7 440 515 437 C520.3 434 518 435.5 523 432.5 C528 429.5 525.8 430.5 530 428 C534.2 425.5 531.8 427.3 535.5 425 C539.2 422.7 537 424 541 421 C545 418 545.3 417.7 547.5 416 M462 425 C461.3 427.3 461.7 426.7 460 432 C458.3 437.3 458.5 435 457 441 C455.5 447 456 447 455.5 450 M510 409 C507.3 410 507 409.8 502 412 C497 414.2 499 412.8 495 415.5 C491 418.2 492.7 417 490 420 C487.3 423 488 423 487 424.5 M456 458.5 C458.3 460 458.3 460.2 463 463 C467.7 465.8 465 464.3 470 467 C475 469.7 472.3 469 478 471 C483.7 473 481.3 472.5 487 473 C492.7 473.5 489 474 495 472.5 C501 471 498.3 471.8 505 468.5 C511.7 465.2 509 466.2 515 462.5 C521 458.8 517.7 461.3 523 457.5 C528.3 453.7 526 455.7 531 451 C536 446.3 535.7 446 538 443.5 M455 452 C456.3 450.3 456.3 450.2 459 447 C461.7 443.8 461.7 444 463 442.5 M464 443.2 L459.3 454 M470.2 447.7 L467 457 M478 450.2 L475.8 459 M487.2 448.8 L486 459.7 M495.4 446.3 L498 457 M503.7 443.2 L507.8 452.9 M514 437 L515.5 448.8 M527 429.5 L527.4 440.5 M459.3 454 L458.2 460 M468 457.6 L466.5 465.3 M476.8 460 L476.8 471 M488.2 460 L491.3 466.3 M502.6 455 L505.3 459.7 M515.5 448.8 L519.8 452.9 M461.3 473.5 C463.2 474.7 462.4 474.8 467 477 C471.6 479.2 469.3 478.8 475 480 C480.7 481.2 478 481 484 480.5 C490 480 490 479.2 493 478.5 M420 392 C422.3 394.3 423 394 427 399 C431 404 429.5 401.3 432 407 C434.5 412.7 433.2 409.3 434.5 416 C435.8 422.7 435.5 423.3 436 427 M535 480.8 C536 482.2 535 482.8 538 485 C541 487.2 538.8 486.3 544 487.5 C549.2 488.7 550.3 488.2 553.5 488.5 M565.2 465.7 L580 449.8 M579.3 388.3 C580.7 390.2 581.9 389.4 583.5 394 C585.1 398.6 585 396.7 584 402 C583 407.3 583.2 405.3 580.5 410 C577.8 414.7 578.5 413 576 416 C573.5 419 574 418 573 419 M571 387.4 L575.5 391 M589.6 396.3 C589.2 399.2 589.7 400.1 588.5 405 C587.3 409.9 587.8 407.7 586 411 C584.2 414.3 584 413.7 583 415 M624.3 410.6 C622.2 414.7 621.6 415.2 618 423 C614.4 430.8 618.2 426.7 613.5 434 C608.8 441.3 610.5 438.3 604 445 C597.5 451.7 600 449.2 594 454 C588 458.8 590.7 456.7 586 459.5 C581.3 462.3 583 461.2 580 462.5 C577 463.8 578 463.2 577 463.5 M617.8 469 C615.2 470.3 615.6 470.2 610 473 C604.4 475.8 607 475.3 601 477.5 C595 479.7 598.3 478.8 592 479.5 C585.7 480.2 585.3 479.5 582 479.5 M74.5 507 L74.5 449.7 L69.4 449.7 L86.4 431.2 L103.7 449.7 L98.8 449.7 L98.8 507 M74.5 483.2 L132.6 483.2 L132.6 478 L150.4 495.6 L132.6 512.4 L132.6 507 L74.5 507 M81.5 444.5 L86.4 449 L91.4 444.5 M86.4 449 L86.4 454.5 M80 467 L80.5 478.5 L86.5 472 L92.5 478.5 L93 467 M128.5 491 L137.5 501.7 M138.4 490 L127.3 501.7 M137 499 L146.6 499 M701 342.5 L729 342.5 M729.5 315 L729.5 370.5 M727 340 L731 340 L731 345 L727 345 Z" fill="none" stroke="#fff" stroke-width="1"/>
<circle cx="382" cy="241" r="3.3" fill="none" stroke="#fff" stroke-width="1" shape-rendering="geometricPrecision"/>
<circle cx="519.6" cy="236.4" r="3.3" fill="none" stroke="#fff" stroke-width="1" shape-rendering="geometricPrecision"/>
<g font-family="'Noto Sans CJK KR','NanumGothic',sans-serif" font-weight="400" font-size="15" fill="#fff" shape-rendering="auto">
<text transform="translate(0,249) scale(1,0.933)" y="0" x="119.9 138.3 156.1 172 179.1 197.6" xml:space="preserve">이해해 주삼</text>
<text transform="translate(0,270.8) scale(1,0.933)" y="0" x="100.3 117 131 139.3 155.6 171 179.1 194.7 210.2 226 232.8 248.3 263.5 279 287.2 303.5 320 336.5 341.8" xml:space="preserve">손은 시간 없어서 등으로 그렸삼;;</text>
</g>
</svg>
<!-- vertical scrollbar of drawing -->
<div class="abs" style="left:731px;top:115px;width:18px;height:406px;background:linear-gradient(90deg,#f3f1ec,#ffffff 30%,#fdfcfa 70%,#eeede5)"></div>
<div class="abs vsb" style="left:732px;top:115px"><svg width="15" height="16" viewBox="0 0 15 16"><path d="M3.5 10 L7.5 6 L11.5 10" fill="none" stroke="#4d6185" stroke-width="2.2"/></svg></div>
<div class="abs vsb" style="left:732px;top:504px"><svg width="15" height="16" viewBox="0 0 15 16"><path d="M3.5 6 L7.5 10 L11.5 6" fill="none" stroke="#4d6185" stroke-width="2.2"/></svg></div>
<div class="abs vsb" style="left:732px;top:263px;height:17px"><svg width="15" height="17" viewBox="0 0 15 17"><path d="M4 5.5 H11 M4 7.5 H11 M4 9.5 H11 M4 11.5 H11" stroke="#8cb0f8" stroke-width="1"/></svg></div>
<!-- layout tabs + horizontal scrollbar -->
<div class="abs" style="left:60px;top:521px;width:690px;height:15px;background:#ece9d8"></div>
<div class="abs nav" style="left:61px;top:521px"><svg width="18" height="15" viewBox="0 0 18 15"><path d="M12.5 3 L7.5 7.5 L12.5 12 Z" fill="#000"/><path d="M6 3 V12" stroke="#000" stroke-width="1.6"/></svg></div>
<div class="abs nav" style="left:79px;top:521px"><svg width="18" height="15" viewBox="0 0 18 15"><path d="M11.5 3 L6.5 7.5 L11.5 12 Z" fill="#000"/></svg></div>
<div class="abs nav" style="left:97px;top:521px"><svg width="18" height="15" viewBox="0 0 18 15"><path d="M6.5 3 L11.5 7.5 L6.5 12 Z" fill="#000"/></svg></div>
<div class="abs nav" style="left:115px;top:521px"><svg width="18" height="15" viewBox="0 0 18 15"><path d="M5.5 3 L10.5 7.5 L5.5 12 Z" fill="#000"/><path d="M12 3 V12" stroke="#000" stroke-width="1.6"/></svg></div>
<svg class="abs" style="left:133px;top:520px" width="130" height="16" viewBox="0 0 130 16">
  <path d="M2 0 H58 L54 15 H8 Z" fill="#000"/>
  <path d="M58.5 0.5 L54.5 14.5 H117 L121.5 0.5" fill="#ece9d8" stroke="#000" stroke-width="1"/>
  <text x="12" y="12" font-family="Liberation Sans,sans-serif" font-size="13.5" font-weight="bold" fill="#fff" letter-spacing="0.3">Model</text>
  <text x="66" y="12" font-family="Liberation Sans,sans-serif" font-size="12.5" fill="#000" letter-spacing="0.2">Layout1</text>
</svg>
<div class="abs hatch" style="left:510px;top:521px;width:221px;height:15px"></div>
<div class="abs" style="left:503px;top:521px;width:4px;height:14px;background:#ece9d8;border-left:1px solid #fff;border-right:1px solid #716f64;border-bottom:1px solid #716f64"></div>
<div class="abs sbtn" style="left:510px;top:521px;width:17px;height:15px"><svg width="14" height="13" viewBox="0 0 14 13"><path d="M8.5 3 L4.5 6.5 L8.5 10 Z" fill="#000"/></svg></div>
<div class="abs sbtn" style="left:600px;top:521px;width:17px;height:15px"></div>
<div class="abs sbtn" style="left:715px;top:521px;height:15px"><svg width="14" height="13" viewBox="0 0 14 13"><path d="M5.5 3 L9.5 6.5 L5.5 10 Z" fill="#000"/></svg></div>
<!-- splitter lines -->
<div class="abs" style="left:5px;top:536px;width:769px;height:2px;background:#f6f5ee"></div>
<div class="abs" style="left:5px;top:538px;width:769px;height:1px;background:#1c1c1c"></div>
<div class="abs" style="left:5px;top:539px;width:769px;height:2px;background:#fff"></div>
<div class="abs" style="left:5px;top:543px;width:769px;height:1px;background:#1c1c1c"></div>
<!-- command window -->
<div class="abs" style="left:7px;top:547px;width:767px;height:44px;background:#fff;border-left:1px solid #808080;border-top:1px solid #808080"></div>
<div class="abs" style="left:8px;top:548px;width:766px;height:43px;background:#fff;border-left:1px solid #404040;border-top:1px solid #404040"></div>
<div class="abs" style="left:8px;top:591px;width:766px;height:1px;background:#fff"></div>
<div class="abs mono" style="left:10px;top:549px">Command: *Cancel*</div>
<div class="abs mono" style="left:10px;top:561px">Command: *Cancel*</div>
<div class="abs" style="left:9px;top:574px;width:730px;height:1px;background:#808080"></div>
<div class="abs mono" style="left:10px;top:577px">Command:</div>
<!-- command window scrollbars -->
<div class="abs" style="left:739px;top:549px;width:35px;height:42px;background:#ece9d8"></div>
<div class="abs" style="left:756px;top:575px;width:18px;height:16px;background:#ece9d8"></div>
<div class="abs vsb" style="left:758px;top:549px;height:13px"><svg width="15" height="13" viewBox="0 0 15 13"><path d="M3.5 8.5 L7.5 4.5 L11.5 8.5" fill="none" stroke="#4d6185" stroke-width="2.2"/></svg></div>
<div class="abs vsb" style="left:758px;top:562px;height:13px"><svg width="15" height="13" viewBox="0 0 15 13"><path d="M3.5 4.5 L7.5 8.5 L11.5 4.5" fill="none" stroke="#4d6185" stroke-width="2.2"/></svg></div>
<div class="abs" style="left:739px;top:549px;width:19px;height:26px;background:#fff"></div>
<div class="abs hatch" style="left:690px;top:575px;width:66px;height:16px"></div>
<div class="abs sbtn" style="left:690px;top:575px"><svg width="14" height="14" viewBox="0 0 14 14"><path d="M8.5 3.5 L4.5 7 L8.5 10.5 Z" fill="#000"/></svg></div>
<div class="abs sbtn" style="left:706px;top:575px;width:17px"></div>
<div class="abs sbtn" style="left:739px;top:575px"><svg width="14" height="14" viewBox="0 0 14 14"><path d="M5.5 3.5 L9.5 7 L5.5 10.5 Z" fill="#000"/></svg></div>
<!-- status bar -->
<div class="abs" style="left:5px;top:596px;width:769px;height:1px;background:#fff"></div>
<div class="abs" style="left:12px;top:599px;font-size:16.5px;line-height:19px;white-space:nowrap;font-family:'Liberation Sans','NanumGothic','Noto Sans CJK KR',sans-serif">선형 치수를 작성함: <span style="font-weight:bold;font-size:13.5px;letter-spacing:-0.1px;margin-left:4px">DIMLINEAR</span></div>

</body></html>
